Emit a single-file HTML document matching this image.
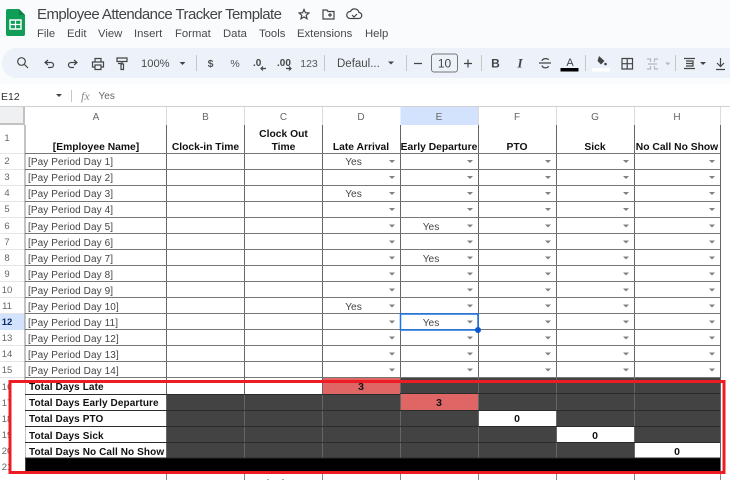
<!DOCTYPE html>
<html><head><meta charset="utf-8"><style>
html,body{margin:0;padding:0;width:730px;height:480px;overflow:hidden;background:#fff}
svg{display:block;filter:blur(.35px);font-family:"Liberation Sans",sans-serif}
.m{font-size:11.3px;fill:#4a4a4a}
.rh{font-size:9.5px;fill:#666;text-anchor:middle}
.ch{font-size:10px;fill:#666;text-anchor:middle}
.h{font-size:10.3px;font-weight:bold;fill:#111;text-anchor:middle}
.p{font-size:10px;fill:#444;letter-spacing:.1px}
.y{font-size:10.2px;fill:#444;text-anchor:middle}
.t{font-size:10px;font-weight:bold;fill:#111;letter-spacing:.1px}
.v{font-size:10.5px;font-weight:bold;fill:#111;text-anchor:middle}
.i{fill:none;stroke:#444;stroke-width:1.2}
.sep{stroke:#c7c7c7;stroke-width:1}
.tb{font-size:10.5px;fill:#555;text-anchor:middle}
</style></head><body>
<svg width="730" height="480" viewBox="0 0 730 480" xmlns="http://www.w3.org/2000/svg">
<rect width="730" height="84" fill="#f9fbfd"/>
<path d="M8 9h11l6 6v19a2 2 0 0 1-2 2H8a2 2 0 0 1-2-2V11a2 2 0 0 1 2-2z" fill="#0f9d58"/>
<path d="M19 9l6 6h-6z" fill="#0b7d45"/>
<path d="M10 20h11v9H10z" fill="none" stroke="#fff" stroke-width="1.4"/><path d="M10 24.5h11M15.5 20v9" stroke="#fff" stroke-width="1.2"/>
<text x="37" y="19" font-size="15" fill="#444" textLength="245" lengthAdjust="spacing">Employee Attendance Tracker Template</text>
<path d="M304 9.5l1.4 3.2 3.5.3-2.7 2.3.8 3.4-3-1.8-3 1.8.8-3.4-2.7-2.3 3.500-.3z" class="i"/>
<path d="M323 10h4l1 1.500h6v7.500h-11z" class="i"/><path d="M328 15h4M330 13v4" class="i" stroke-width="1"/>
<path d="M350 18.500h8.500a3 3 0 0 0 .5-6 4.500 4.500 0 0 0-8.500-1 3.500 3.500 0 0 0-.5 7z" class="i"/><path d="M352 15l2 2 3-3" class="i" stroke-width="1"/>
<text x="37" y="37" class="m">File</text><text x="67" y="37" class="m">Edit</text><text x="98" y="37" class="m">View</text><text x="134" y="37" class="m">Insert</text><text x="175" y="37" class="m">Format</text><text x="223" y="37" class="m">Data</text><text x="259" y="37" class="m">Tools</text><text x="297" y="37" class="m">Extensions</text><text x="365" y="37" class="m">Help</text>

<path d="M17 48H730V78H17A15 15 0 0 1 17 48z" fill="#edf2fa"/>
<circle cx="21.500" cy="61.500" r="3.800" class="i" stroke-width="1.500"/><path d="M24.500 64.500L28 68" class="i" stroke-width="1.700"/>
<path d="M48 60l-3 2.500 3 2.500M45 62.500h6a2.500 2.500 0 0 1 0 5h-3" class="i"/>
<path d="M74 60l3 2.500-3 2.500M77 62.500h-6a2.500 2.500 0 0 0 0 5h3" class="i"/>
<path d="M95 62v-3.500h6V62M95 67h-2.500v-5h11v5H101M95 65h6v4.500h-6z" class="i"/>
<path d="M117 58h10v3.500h-10zM122 61.500v2h-4v0M121 64v5.500h2.500V64z" class="i"/>
<text x="141" y="67" font-size="11.200" fill="#4a4a4a">100%</text><path d="M179.500 62h6l-3 3z" fill="#444"/>
<line x1="196.500" y1="55" x2="196.500" y2="71" class="sep"/>
<text x="210.500" y="67" class="tb" font-weight="bold">$</text><text x="235" y="67" class="tb">%</text>
<text x="253" y="66" font-size="10" font-weight="bold" fill="#444">.0</text><path d="M266 68.500h-5m2-2l-2 2 2 2" class="i" stroke-width="1"/>
<text x="277" y="66" font-size="10" font-weight="bold" fill="#444">.00</text><path d="M286 68.500h5m-2-2l2 2-2 2" class="i" stroke-width="1"/>
<text x="309" y="67" class="tb" font-size="10">123</text>
<line x1="324.500" y1="55" x2="324.500" y2="71" class="sep"/>
<text x="337" y="67" font-size="11.500" fill="#4a4a4a">Defaul...</text><path d="M388 61.500h6l-3 3z" fill="#444"/>
<line x1="406.500" y1="55" x2="406.500" y2="71" class="sep"/>
<path d="M414 63.500h8M464 63.500h8M468 59.500v8" class="i"/>
<rect x="431.500" y="54" width="26" height="18" rx="2.500" fill="none" stroke="#747775"/>
<text x="444.500" y="67.500" font-size="12" fill="#444" text-anchor="middle">10</text>
<line x1="481.500" y1="55" x2="481.500" y2="71" class="sep"/>
<text x="495.500" y="67.500" font-size="12" font-weight="bold" fill="#444" text-anchor="middle">B</text>
<text x="520" y="67.500" font-family="Liberation Serif" font-size="13" font-weight="bold" font-style="italic" fill="#444" text-anchor="middle">I</text>
<path d="M539 63h12M542 61c.5-3 6-3 6.500-1M542 65.500c.5 3 6 3 6.500.5" class="i"/>
<text x="570" y="66" font-size="11" fill="#444" text-anchor="middle">A</text><rect x="560.500" y="68" width="18" height="3.500" fill="#000"/>
<line x1="585.500" y1="55" x2="585.500" y2="71" class="sep"/>
<path d="M599 56l5.500 5-3.500 3.500-3.500-3.500z" fill="#444"/><circle cx="605.500" cy="64" r="1.300" fill="#444"/><rect x="592" y="68" width="18" height="3.500" fill="#fff"/>
<path d="M622 58.500h10.500V69H622zM627.200 58.500V69M622 63.700h10.500" class="i" stroke-width="1.300"/>
<path d="M647 59h3.500v3M647 69h3.500v-3M658 59h-3.500v3M658 69h-3.500v-3M648 64h9" fill="none" stroke="#b5b8bc" stroke-width="1.200"/>
<path d="M665 62.500h5.500l-2.750 2.750z" fill="#b5b8bc"/>
<line x1="675.500" y1="55" x2="675.500" y2="71" class="sep"/>
<path d="M684 58.500h11M686 63.500h7M684 68.500h11M686 61h7v5h-7" class="i" stroke-width="1.200"/><path d="M700 62h6l-3 3z" fill="#444"/>
<path d="M720.500 58v8M717 63l3.500 3.500L724 63M716 69.500h9" class="i"/>

<rect y="84" width="730" height="23" fill="#fff"/>
<text x="1" y="100" font-size="10.500" fill="#333">E12</text><path d="M56 94h6l-3 3z" fill="#444"/>
<line x1="71.500" y1="90" x2="71.500" y2="102" class="sep"/>
<text x="81" y="100" font-family="Liberation Serif" font-size="12" font-style="italic" fill="#888">fx</text>
<text x="98.500" y="99" font-size="10" fill="#666">Yes</text>

<!-- headers -->
<line x1="0" y1="106.500" x2="730" y2="106.500" stroke="#d0d0d0"/>
<rect x="0" y="107" width="25" height="18" fill="#eef0f2"/><path d="M24 107v18M0 124h25" stroke="#c2c2c2" stroke-width="2"/>
<rect x="400.500" y="107" width="78" height="18" fill="#d3e3fd"/>
<path d="M166.500 107v18M244.500 107v18M322.500 107v18M478.500 107v18M556.500 107v18M634.500 107v18M720.500 107v18" stroke="#dcdcdc"/>
<text x="96" y="120" class="ch">A</text><text x="205.500" y="120" class="ch">B</text><text x="283.500" y="120" class="ch">C</text><text x="361" y="120" class="ch">D</text><text x="439" y="120" class="ch">E</text><text x="517" y="120" class="ch">F</text><text x="595" y="120" class="ch">G</text><text x="677" y="120" class="ch">H</text>

<!-- row headers -->
<path d="M0 153.500h25M0 169.500h25M0 185.500h25M0 201.500h25M0 217.500h25M0 233.500h25M0 249.500h25M0 265.500h25M0 281.500h25M0 297.500h25M0 313.500h25M0 329.500h25M0 345.500h25M0 361.500h25M0 377.500h25" stroke="#e6e6e6"/>
<rect x="0" y="314" width="25" height="16" fill="#d3e3fd"/>
<text x="7" y="141" class="rh">1</text><text x="7" y="164" class="rh">2</text><text x="7" y="180" class="rh">3</text><text x="7" y="196" class="rh">4</text><text x="7" y="212" class="rh">5</text><text x="7" y="229" class="rh">6</text><text x="7" y="245" class="rh">7</text><text x="7" y="261" class="rh">8</text><text x="7" y="277" class="rh">9</text><text x="7" y="293" class="rh">10</text><text x="7" y="309" class="rh">11</text><text x="7" y="325" class="rh" font-weight="bold" style="fill:#0b2f6b">12</text><text x="7" y="341" class="rh">13</text><text x="7" y="357" class="rh">14</text><text x="7" y="373" class="rh">15</text><text x="7" y="390" class="rh">16</text><text x="7" y="406" class="rh">17</text><text x="7" y="422" class="rh">18</text><text x="7" y="438" class="rh">19</text><text x="7" y="454" class="rh">20</text><text x="7" y="470" class="rh">21</text>

<!-- summary fills -->
<rect x="322" y="378" width="78" height="16" fill="#e06666"/>
<rect x="400" y="378" width="320" height="16" fill="#434343"/>
<rect x="166" y="394" width="554" height="64" fill="#434343"/>
<rect x="400" y="394" width="78" height="16" fill="#e06666"/>
<rect x="478" y="410" width="78" height="16" fill="#fff"/>
<rect x="556" y="426" width="78" height="16" fill="#fff"/>
<rect x="634" y="442" width="86" height="16" fill="#fff"/>
<rect x="25" y="458" width="695" height="16" fill="#000"/>

<!-- grid -->
<path d="M25 125v349" stroke="#8a8a8a" fill="none"/>
<path d="M166.500 125v333M244.500 125v333M322.500 125v333M400.500 125v333M478.500 125v333M556.500 125v333M634.500 125v333M720.500 125v349" stroke="#666" fill="none"/>
<path d="M166.500 474v6M244.500 474v6M322.500 474v6M400.500 474v6M478.500 474v6M556.500 474v6M634.500 474v6M720.500 474v6" stroke="#888" fill="none"/>
<path d="M25 153.500h695M25 169.500h695M25 185.500h695M25 201.500h695M25 217.500h695M25 233.500h695M25 249.500h695M25 265.500h695M25 281.500h695M25 297.500h695M25 313.500h695M25 329.500h695M25 345.500h695M25 361.500h695M25 377.500h695" stroke="#777" fill="none"/>
<path d="M25 394.500h375M400 393.500h320M25 410.500h695M25 426.500h695M25 442.500h695M25 458h695" stroke="#2c2c2c" fill="none"/>

<!-- header labels -->
<text x="96" y="150" class="h">[Employee Name]</text><text x="205.500" y="150" class="h">Clock-in Time</text><text x="283.500" y="137" class="h">Clock Out</text><text x="283.500" y="150" class="h">Time</text><text x="361" y="150" class="h">Late Arrival</text><text x="439" y="150" class="h">Early Departure</text><text x="517" y="150" class="h">PTO</text><text x="595" y="150" class="h">Sick</text><text x="677" y="150" class="h">No Call No Show</text>

<!-- rows -->
<text x="28" y="165" class="p">[Pay Period Day 1]</text><text x="28" y="181" class="p">[Pay Period Day 2]</text><text x="28" y="197" class="p">[Pay Period Day 3]</text><text x="28" y="213" class="p">[Pay Period Day 4]</text><text x="28" y="230" class="p">[Pay Period Day 5]</text><text x="28" y="246" class="p">[Pay Period Day 6]</text><text x="28" y="262" class="p">[Pay Period Day 7]</text><text x="28" y="278" class="p">[Pay Period Day 8]</text><text x="28" y="294" class="p">[Pay Period Day 9]</text><text x="28" y="310" class="p">[Pay Period Day 10]</text><text x="28" y="326" class="p">[Pay Period Day 11]</text><text x="28" y="342" class="p">[Pay Period Day 12]</text><text x="28" y="358" class="p">[Pay Period Day 13]</text><text x="28" y="374" class="p">[Pay Period Day 14]</text>
<text x="353.500" y="165" class="y">Yes</text><text x="353.500" y="197" class="y">Yes</text><text x="353.500" y="310" class="y">Yes</text><text x="431" y="230" class="y">Yes</text><text x="431" y="262" class="y">Yes</text><text x="431" y="326" class="y">Yes</text>

<defs><path id="a" d="M389 160h6l-3 3zM467 160h6l-3 3zM545 160h6l-3 3zM623 160h6l-3 3zM709 160h6l-3 3z" fill="#808080"/></defs>
<use href="#a"/><use href="#a" y="16"/><use href="#a" y="32"/><use href="#a" y="48"/><use href="#a" y="64.500"/><use href="#a" y="80.500"/><use href="#a" y="96.500"/><use href="#a" y="112.500"/><use href="#a" y="128.500"/><use href="#a" y="144.500"/><use href="#a" y="160.500"/><use href="#a" y="176.500"/><use href="#a" y="192.500"/><use href="#a" y="208.500"/>

<!-- selection -->
<rect x="400.500" y="314" width="77.500" height="16" fill="none" stroke="#1a73e8" stroke-width="1.500"/>
<circle cx="478" cy="330" r="3" fill="#0b57d0"/>

<!-- totals -->
<text x="29" y="390" class="t">Total Days Late</text><text x="29" y="406" class="t">Total Days Early Departure</text><text x="29" y="422" class="t">Total Days PTO</text><text x="29" y="439" class="t">Total Days Sick</text><text x="29" y="455" class="t">Total Days No Call No Show</text>
<text x="361" y="390" class="v">3</text><text x="439" y="406" class="v">3</text><text x="517" y="422" class="v">0</text><text x="595" y="439" class="v">0</text><text x="677" y="455" class="v">0</text>
<text x="283.500" y="487" class="h">Clock Out</text>

<!-- annotation -->
<rect x="11" y="383" width="14" height="88" fill="#fff"/>
<rect x="10" y="381.500" width="714" height="91" fill="none" stroke="#ed1c24" stroke-width="3"/>
</svg>
</body></html>
